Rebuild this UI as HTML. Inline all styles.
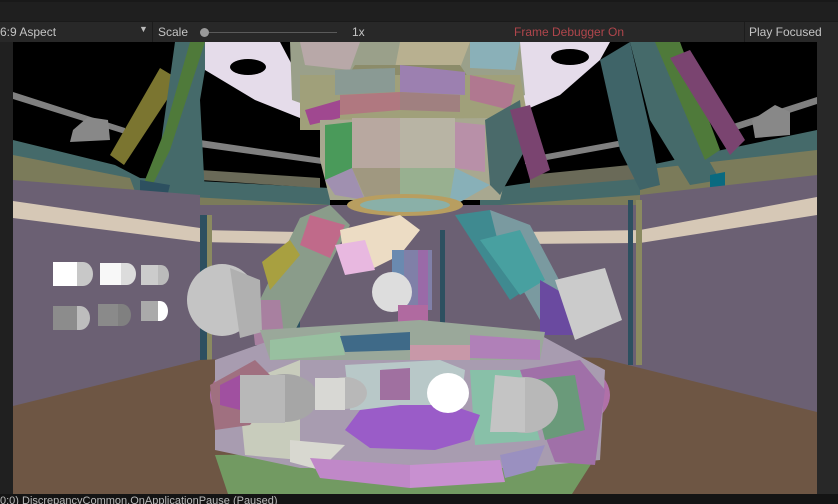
<!DOCTYPE html>
<html><head><meta charset="utf-8"><style>
html,body{margin:0;padding:0;width:838px;height:504px;overflow:hidden;background:#202020;font-family:"Liberation Sans",sans-serif}
.top{position:absolute;left:0;top:0;width:838px;height:21px;background:#1f1f1f;border-top:2px solid #191919;box-sizing:border-box}
.bar{position:absolute;left:0;top:21px;width:838px;height:21px;background:#282828;border-top:1px solid #1a1a1a;box-sizing:border-box;font-size:12px;color:#c4c4c4}
.bar span{position:absolute;top:3px}
.sep{position:absolute;top:0;width:1px;height:20px;background:#1c1c1c}
.status{position:absolute;left:0;top:494px;width:838px;height:10px;background:#141414;font-size:11px;color:#bbb;overflow:hidden}
svg{position:absolute;left:0;top:0}
</style></head><body>
<div class="top"></div>
<div class="bar">
<span style="left:0">6:9 Aspect</span>
<span style="left:139px;top:2px;font-size:9px;color:#bbb">▼</span>
<div class="sep" style="left:152px"></div>
<span style="left:158px">Scale</span>
<div style="position:absolute;left:200px;top:6px;width:9px;height:9px;border-radius:50%;background:#999"></div>
<div style="position:absolute;left:209px;top:10px;width:128px;height:1px;background:#5a5a5a"></div>
<span style="left:352px">1x</span>
<span style="left:514px;color:#b0464c">Frame Debugger On</span>
<div class="sep" style="left:744px"></div>
<span style="left:749px">Play Focused</span>
</div>
<svg width="838" height="504" viewBox="0 0 838 504">
<defs><clipPath id="c"><rect x="13" y="42" width="804" height="452"/></clipPath></defs>
<rect x="817" y="42" width="21" height="452" fill="#282828"/>
<g clip-path="url(#c)">
<rect x="13" y="42" width="804" height="452" fill="#000"/>
<polygon points="13,92 125,128 125,134 13,99" fill="#808080"/>
<polygon points="200,140 322,158 322,164 200,147" fill="#808080"/>
<polygon points="525,158 650,135 650,141 525,164" fill="#808080"/>
<polygon points="730,125 817,97 817,104 730,132" fill="#808080"/>
<polygon points="73,130 88,117 108,120 110,140 70,142" fill="#888"/>
<polygon points="752,120 775,105 790,112 790,135 755,138" fill="#888"/>
<polygon points="205,42 280,42 300,80 300,118 255,100 205,70" fill="#e5dcea"/>
<ellipse cx="248" cy="67" rx="18" ry="8" fill="#000"/>
<polygon points="505,42 610,42 600,60 560,95 525,110 510,100" fill="#e5dcea"/>
<ellipse cx="570" cy="57" rx="19" ry="8" fill="#000"/>
<polygon points="13,140 115,165 140,178 330,188 330,215 13,185" fill="#456a6a"/>
<polygon points="13,155 130,178 140,205 13,180" fill="#7b7b5a"/>
<polygon points="200,170 320,178 320,188 200,180" fill="#6a6a58"/>
<polygon points="175,196 330,205 330,215 175,210" fill="#7b7b5a"/>
<polygon points="160,68 180,80 124,165 110,155" fill="#7b7530"/>
<polygon points="175,42 205,42 205,70 200,100 205,195 150,195 160,150" fill="#456a6a"/>
<polygon points="190,42 205,42 170,150 150,190 145,180 165,130" fill="#4f7a3a"/>
<polygon points="140,180 170,185 165,205 140,200" fill="#2d5060"/>
<polygon points="480,190 650,165 817,130 817,185 640,210 480,215" fill="#456a6a"/>
<polygon points="640,170 817,150 817,178 640,200" fill="#7b7b5a"/>
<polygon points="530,175 650,163 650,178 530,188" fill="#6a6a58"/>
<polygon points="500,205 640,195 640,215 500,218" fill="#7b7b5a"/>
<polygon points="630,42 660,42 700,145 720,180 690,185 650,120" fill="#456a6a"/>
<polygon points="655,42 680,42 720,150 705,160" fill="#4f7a3a"/>
<polygon points="670,58 690,50 745,140 730,155" fill="#7a4470"/>
<polygon points="600,60 630,42 650,130 660,185 640,190 620,150" fill="#3f6468"/>
<polygon points="710,175 725,172 725,195 710,195" fill="#0a6a80"/>
<polygon points="13,180 200,195 200,420 13,420" fill="#6b6073"/>
<polygon points="200,205 640,205 640,420 200,420" fill="#6b6073"/>
<polygon points="640,195 817,175 817,420 640,420" fill="#6b6073"/>
<polygon points="13,201 200,228 200,242 13,218" fill="#d6c8b6"/>
<polygon points="200,230 300,232 300,244 200,242" fill="#d6c8b6"/>
<polygon points="520,232 640,230 640,243 520,244" fill="#d6c8b6"/>
<polygon points="640,230 817,197 817,215 640,243" fill="#d6c8b6"/>
<rect x="200" y="215" width="7" height="150" fill="#2d5060"/>
<rect x="207" y="215" width="5" height="150" fill="#8a8a60"/>
<rect x="628" y="200" width="5" height="165" fill="#2d5060"/>
<rect x="636" y="200" width="6" height="165" fill="#8a8a60"/>
<rect x="440" y="230" width="5" height="110" fill="#2d5060"/>
<rect x="295" y="240" width="5" height="110" fill="#2d5060"/>
<rect x="53" y="262" width="24" height="24" fill="#fff"/><path d="M77,262h6a10,12 0 0 1 0,24h-6z" fill="#c8c8c8"/>
<rect x="100" y="263" width="21" height="22" fill="#f8f8f8"/><path d="M121,263h6a9,11 0 0 1 0,22h-6z" fill="#dcdcdc"/>
<rect x="141" y="265" width="17" height="20" fill="#ccc"/><path d="M158,265h3a8,10 0 0 1 0,20h-3z" fill="#bbb"/>
<rect x="53" y="306" width="24" height="24" fill="#8c8c8c"/><path d="M77,306h3a10,12 0 0 1 0,24h-3z" fill="#bdbdbd"/>
<rect x="98" y="304" width="22" height="22" fill="#8a8a8a"/><path d="M118,304h4a9,11 0 0 1 0,22h-4z" fill="#808080"/>
<rect x="141" y="301" width="17" height="20" fill="#aaa"/><path d="M158,301h2a8,10 0 0 1 0,20h-2z" fill="#fff"/>
<polygon points="13,406 200,360 420,350 600,358 817,412 817,494 13,494" fill="#6e5644"/>
<polygon points="215,455 600,450 572,494 228,494" fill="#729a62"/>
<polygon points="290,42 520,42 525,95 490,110 320,110 292,100" fill="#9aa08a"/>
<polygon points="300,42 360,42 350,70 305,65" fill="#b8a8a8"/>
<polygon points="400,42 470,42 460,68 395,68" fill="#b8b090"/>
<polygon points="470,42 520,42 515,70 470,68" fill="#8ab0b8"/>
<polygon points="355,65 460,65 470,80 345,80" fill="#8c8c6a"/>
<polygon points="300,75 520,75 530,130 300,130" fill="#a0a07a"/>
<polygon points="335,70 395,68 395,92 335,95" fill="#8a9a94"/>
<polygon points="400,65 465,72 465,95 400,92" fill="#9c80b0"/>
<polygon points="470,75 515,85 510,110 470,100" fill="#b07890"/>
<polygon points="340,95 400,92 400,110 340,115" fill="#b07880"/>
<polygon points="400,92 460,95 460,112 400,110" fill="#a08080"/>
<polygon points="305,110 340,100 340,118 310,125" fill="#a04890"/>
<polygon points="320,120 490,118 510,160 500,200 330,200 320,160" fill="#a8a890"/>
<polygon points="325,125 352,122 352,180 325,180" fill="#4a9a5a"/>
<polygon points="352,118 400,118 400,168 352,168" fill="#b8a8a0"/>
<polygon points="400,118 455,118 455,168 400,168" fill="#b8b4a4"/>
<polygon points="455,122 485,125 485,172 455,168" fill="#b890a8"/>
<polygon points="325,180 352,168 365,200 335,195" fill="#a090b0"/>
<polygon points="352,168 400,168 400,195 365,198" fill="#a09880"/>
<polygon points="400,168 455,168 450,198 400,196" fill="#98b090"/>
<polygon points="455,168 490,185 460,202 450,198" fill="#88b0b8"/>
<polygon points="485,120 520,100 525,150 500,195 490,185" fill="#4a6a6a"/>
<polygon points="510,110 530,105 550,170 530,180" fill="#7a4470"/>
<ellipse cx="405" cy="205" rx="58" ry="11" fill="#b89e60"/>
<ellipse cx="405" cy="205" rx="45" ry="7" fill="#8ab0a8"/>
<polygon points="300,218 330,205 350,225 290,340 250,320" fill="#8a9c8a"/>
<polygon points="262,262 290,240 300,255 270,290" fill="#a8a040"/>
<polygon points="310,215 345,225 330,258 300,245" fill="#c06a8a"/>
<polygon points="250,300 280,300 285,345 255,345" fill="#a880a0"/>
<polygon points="455,215 490,210 540,280 510,300" fill="#3f8a90"/>
<polygon points="490,210 530,225 575,310 540,320 500,250" fill="#7a9aa0"/>
<polygon points="480,240 520,230 545,280 520,295" fill="#48a0a0"/>
<polygon points="540,280 575,300 575,335 540,335" fill="#6a4aa0"/>
<polygon points="340,230 400,215 420,230 400,255 370,270 345,265" fill="#ecdcc4"/>
<polygon points="335,245 365,240 375,270 345,275" fill="#e8b8e0"/>
<rect x="392" y="250" width="40" height="60" fill="#8080a8"/>
<rect x="392" y="250" width="12" height="60" fill="#6a8ab0"/>
<rect x="418" y="250" width="10" height="60" fill="#9a6aa8"/>
<ellipse cx="392" cy="292" rx="20" ry="20" fill="#ddd"/>
<rect x="398" y="305" width="30" height="35" fill="#b06aa0"/>
<ellipse cx="222" cy="300" rx="35" ry="36" fill="#c4c4c4"/>
<polygon points="230,268 260,280 262,332 240,338" fill="#b0b0b0"/>
<polygon points="555,280 605,268 622,320 575,340" fill="#cbcbcb"/>
<ellipse cx="410" cy="395" rx="200" ry="68" fill="#b070a8"/>
<polygon points="215,360 300,330 420,325 540,335 605,370 600,460 520,468 300,468 215,450" fill="#a89cb0"/>
<polygon points="260,330 420,320 545,332 540,360 270,360" fill="#9aa89a"/>
<polygon points="270,340 340,332 345,355 270,360" fill="#98c0a0"/>
<polygon points="340,336 410,332 410,350 345,352" fill="#3f6a88"/>
<polygon points="410,345 470,345 470,360 410,360" fill="#c898a8"/>
<polygon points="470,335 540,340 540,360 470,358" fill="#b080b8"/>
<polygon points="345,365 440,360 465,370 460,410 350,410" fill="#b8c8c8"/>
<polygon points="380,370 410,368 410,400 380,400" fill="#a070a0"/>
<polygon points="238,385 300,360 300,460 245,455" fill="#c8ccbc"/>
<polygon points="210,385 255,360 280,385 250,425 215,430" fill="#a07080"/>
<polygon points="220,385 240,375 240,410 220,405" fill="#a050a0"/>
<polygon points="520,370 580,360 605,390 595,465 555,462" fill="#a070a8"/>
<polygon points="530,380 575,375 585,430 545,440" fill="#6a9a7a"/>
<polygon points="470,370 520,370 540,440 475,445" fill="#88c0a8"/>
<polygon points="290,440 345,445 320,470 290,462" fill="#d8d8d0"/>
<polygon points="310,458 410,465 410,488 320,478" fill="#c088c8"/>
<polygon points="410,465 500,460 505,482 410,488" fill="#c890d0"/>
<polygon points="500,455 545,445 535,470 505,478" fill="#9a90c0"/>
<polygon points="345,430 360,410 400,405 450,405 480,415 470,440 435,450 370,448" fill="#9a5cc8"/>
<ellipse cx="285" cy="398" rx="33" ry="24" fill="#a6a6a6"/>
<rect x="240" y="375" width="45" height="48" fill="#b8b8b8"/>
<ellipse cx="345" cy="393" rx="22" ry="16" fill="#b8b8b8"/>
<rect x="315" y="378" width="30" height="32" fill="#d8d8d4"/>
<ellipse cx="448" cy="393" rx="21" ry="20" fill="#fff"/>
<ellipse cx="525" cy="405" rx="33" ry="28" fill="#b8b8b8"/>
<polygon points="495,375 525,378 525,432 490,432" fill="#c4c4c4"/>
</g>
</svg>
<div class="status"><div style="position:absolute;top:1px;left:0">0:0) DiscrepancyCommon.OnApplicationPause (Paused)</div></div>
</body></html>
